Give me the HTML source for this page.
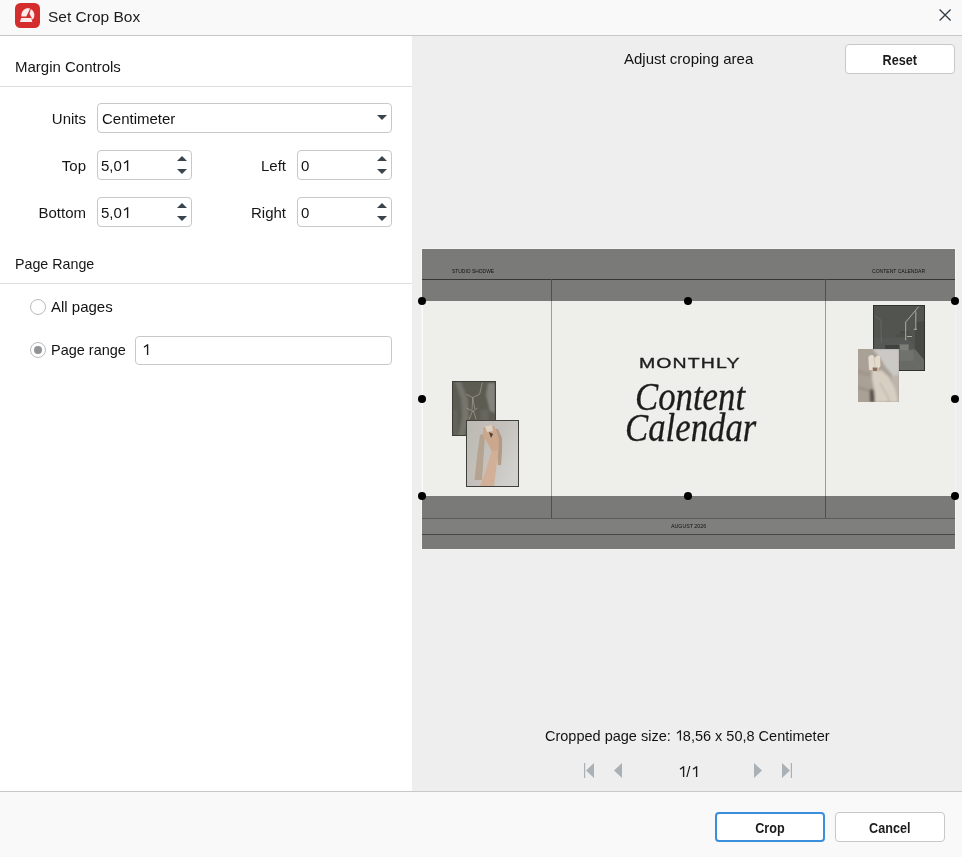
<!DOCTYPE html>
<html><head><meta charset="utf-8">
<style>
*{box-sizing:border-box;margin:0;padding:0}
html,body{width:962px;height:857px;overflow:hidden;background:#fff;font-family:"Liberation Sans",sans-serif;color:#1a1a1a}
.abs{position:absolute}
#title{left:0;top:0;width:962px;height:36px;background:#f9f9f9;border-bottom:1px solid #c6c6c6}

#ttxt{left:48px;top:8px;font-size:15.5px;color:#1b1b1b;white-space:nowrap}
#close{left:937px;top:7px;width:15px;height:15px}
#left{left:0;top:36px;width:412px;height:755px;background:#fff}
#right{left:412px;top:36px;width:550px;height:755px;background:#eeeeee}
.sep{height:1px;background:#dedede;width:412px;left:0}
.h{font-size:15px;color:#161616;white-space:nowrap}
.lbl{font-size:15px;color:#161616;white-space:nowrap;text-align:right}
.box{border:1px solid #c8c8c8;border-radius:4px;background:#fff}
.val{font-size:15px;color:#121212;white-space:nowrap}
.up{width:0;height:0;border-left:5px solid transparent;border-right:5px solid transparent;border-bottom:5px solid #3a444c}
.dn{width:0;height:0;border-left:5px solid transparent;border-right:5px solid transparent;border-top:5px solid #3a444c}
#bottom{left:0;top:791px;width:962px;height:66px;background:#f9f9f9;border-top:1px solid #c9c9c9}
.btn{border-radius:4px;background:#fff;font-size:15px;font-weight:bold;text-align:center;color:#1b1b1b}
.bt{display:inline-block;transform:scaleX(0.87);font-size:14.5px}
.d1{vertical-align:baseline;display:inline-block}
.hd{width:8px;height:8px;border-radius:50%;background:#000}
.nav{color:#a8b0b8}
.tiny{font-size:6px;color:#262626;white-space:nowrap;line-height:7px;transform-origin:0 0}
.monthly{font-size:15px;letter-spacing:0.85px;color:#1e1e1e;white-space:nowrap;line-height:17px;-webkit-text-stroke:0.35px #1e1e1e;transform:scaleX(1.3);transform-origin:0 0}
.big{font-family:"Liberation Serif",serif;font-style:italic;font-size:39.5px;color:#1c1c1c;white-space:nowrap;line-height:44px;-webkit-text-stroke:0.3px #1c1c1c;transform:scaleX(0.88);transform-origin:0 0}
</style></head><body>
<div id="root" style="position:absolute;left:0;top:0;width:962px;height:857px;will-change:transform;overflow:hidden">
<div id="title" class="abs"></div>
<svg id="logo" class="abs" style="left:15px;top:3px" width="25" height="25" viewBox="0 0 25 25">
<rect x="0" y="0" width="25" height="25" rx="5.5" fill="#d32d2d"/>
<path d="M-5.8 13.6 A7 7 0 0 1 2.9 5.4 L-1 13.6 Z" transform="translate(12.3 0)" fill="#fdeceb"/>
<path d="M3.6 5.9 A7 7 0 0 1 5.3 16.7 L2.2 10.7 Z" transform="translate(12.3 0)" fill="#fdeceb"/>
<path d="M-6.1 15.1 L4.1 15.1 L5.0 19.0 L-7.4 19.0 Z" transform="translate(12.3 0)" fill="#fdeceb"/>
</svg>
<div id="ttxt" class="abs">Set Crop Box</div>
<svg id="close" class="abs" viewBox="0 0 15 15"><path d="M2.6 2.5L13.6 13.5M13.6 2.5L2.6 13.5" stroke="#333c44" stroke-width="1.25"/></svg>

<div id="left" class="abs"></div>
<div id="right" class="abs"></div>

<!-- Margin controls -->
<div class="abs h" style="left:15px;top:58px">Margin Controls</div>
<div class="abs sep" style="top:86px"></div>

<div class="abs lbl" style="left:0;width:86px;top:110px">Units</div>
<div class="abs box" style="left:97px;top:103px;width:295px;height:30px"></div>
<div class="abs val" style="left:102px;top:110px">Centimeter</div>
<div class="abs dn" style="left:377px;top:115px"></div>

<div class="abs lbl" style="left:0;width:86px;top:157px">Top</div>
<div class="abs box" style="left:97px;top:150px;width:95px;height:30px"></div>
<div class="abs val" style="left:101px;top:157px">5,0<svg class="d1" width="8.34" height="11" viewBox="0 0 8.34 11"><path d="M5.6 0.2V11M5.6 0.7L2.0 3.3" stroke="#1a1a1a" stroke-width="1.35" fill="none"/></svg></div>
<div class="abs up" style="left:177px;top:156px"></div>
<div class="abs dn" style="left:177px;top:169px"></div>

<div class="abs lbl" style="left:0;width:86px;top:204px">Bottom</div>
<div class="abs box" style="left:97px;top:197px;width:95px;height:30px"></div>
<div class="abs val" style="left:101px;top:204px">5,0<svg class="d1" width="8.34" height="11" viewBox="0 0 8.34 11"><path d="M5.6 0.2V11M5.6 0.7L2.0 3.3" stroke="#1a1a1a" stroke-width="1.35" fill="none"/></svg></div>
<div class="abs up" style="left:177px;top:203px"></div>
<div class="abs dn" style="left:177px;top:216px"></div>

<div class="abs lbl" style="left:200px;width:86px;top:157px">Left</div>
<div class="abs box" style="left:297px;top:150px;width:95px;height:30px"></div>
<div class="abs val" style="left:301px;top:157px">0</div>
<div class="abs up" style="left:377px;top:156px"></div>
<div class="abs dn" style="left:377px;top:169px"></div>

<div class="abs lbl" style="left:200px;width:86px;top:204px">Right</div>
<div class="abs box" style="left:297px;top:197px;width:95px;height:30px"></div>
<div class="abs val" style="left:301px;top:204px">0</div>
<div class="abs up" style="left:377px;top:203px"></div>
<div class="abs dn" style="left:377px;top:216px"></div>

<!-- Page range -->
<div class="abs h" style="left:15px;top:255px;transform:scaleX(0.95);transform-origin:0 0">Page Range</div>
<div class="abs sep" style="top:283px"></div>
<div class="abs" style="left:30px;top:299px;width:16px;height:16px;border-radius:50%;border:1px solid #bbbbbb;background:#fff"></div>
<div class="abs val" style="left:51px;top:298px">All pages</div>
<div class="abs" style="left:30px;top:342px;width:16px;height:16px;border-radius:50%;border:1px solid #bbbbbb;background:#fff"></div>
<div class="abs" style="left:34px;top:346px;width:8px;height:8px;border-radius:50%;background:#909497"></div>
<div class="abs val" style="left:51px;top:341px;transform:scaleX(0.965);transform-origin:0 0">Page range</div>
<div class="abs box" style="left:135px;top:336px;width:257px;height:29px"></div>
<div class="abs val" style="left:142px;top:341px"><svg class="d1" width="8.34" height="11" viewBox="0 0 8.34 11"><path d="M5.6 0.2V11M5.6 0.7L2.0 3.3" stroke="#1a1a1a" stroke-width="1.35" fill="none"/></svg></div>

<!-- Right panel -->
<div class="abs val" style="left:624px;top:50px">Adjust croping area</div>
<div class="abs btn box" style="left:845px;top:44px;width:110px;height:30px;line-height:29px"><span class="bt">Reset</span></div>

<!-- page preview -->
<div class="abs" style="left:421px;top:248px;width:535px;height:302px;background:#f4f4f4"></div>
<div class="abs" style="left:422px;top:249px;width:533px;height:300px;background:#eeeeea;overflow:hidden">
  <div class="abs" style="left:0;top:30px;width:533px;height:1px;background:#6a6a6a"></div>
  <div class="abs" style="left:0;top:270px;width:533px;height:15px;background:#f8f8f5"></div>
  <div class="abs" style="left:0;top:269px;width:533px;height:1px;background:#b0b0b0"></div>
  <div class="abs" style="left:0;top:285px;width:533px;height:1px;background:#8a8a8a"></div>
  <div class="abs" style="left:129px;top:30px;width:1px;height:239px;background:#9a9a9a"></div>
  <div class="abs" style="left:403px;top:30px;width:1px;height:239px;background:#9a9a9a"></div>
  <div class="abs tiny" style="left:30px;top:19px;transform:scaleX(0.82)">STUDIO SHODWE</div>
  <div class="abs tiny" style="left:450px;top:19px;transform:scaleX(0.84)">CONTENT CALENDAR</div>
  <div class="abs tiny" style="left:249px;top:274px;transform:scaleX(0.88)">AUGUST 2026</div>
  <div class="abs monthly" style="left:217px;top:105px">MONTHLY</div>
  <div class="abs big" style="left:213px;top:126px">Content</div>
  <div class="abs big" style="left:203px;top:157px">Calendar</div>
  <!-- photo1 -->
  <svg class="abs" style="left:30px;top:132px" width="44" height="55" viewBox="0 0 44 55">
    <defs>
      <filter id="bl1" x="-20%" y="-20%" width="140%" height="140%"><feGaussianBlur stdDeviation="1.2"/></filter>
      <filter id="bl1b" x="-20%" y="-20%" width="140%" height="140%"><feGaussianBlur stdDeviation="0.35"/></filter>
    </defs>
    <rect width="44" height="55" fill="#5c5c53"/>
    <g filter="url(#bl1)">
      <path d="M3 1 L9 1 L16 18 L17 38 L13 55 L6 55 L10 36 L9 18 Z" fill="#74746b"/>
      <path d="M36 2 L43 2 L43 32 L38 30 L34 14 Z" fill="#83847d"/>
      <path d="M0 30 L5 28 L6 55 L0 55 Z" fill="#64645b"/>
      <path d="M28 30 L36 28 L38 50 L30 52 Z" fill="#66665d"/>
    </g>
    <g filter="url(#bl1b)">
      <path d="M30.4 1.4 L27.6 13.2 L20.7 16.6 L14.5 13.2 M20.7 16.6 L20 29 M20.7 16.6 L22.8 28 M14.5 27 L20.7 30.4 L25.5 27 M20.5 30 L17.3 38 M21.5 30 L24.2 38.6" stroke="#b0ad9b" stroke-width="0.6" fill="none"/>
    </g>
    <rect x="0.5" y="0.5" width="43" height="54" fill="none" stroke="#3f3f3a" stroke-width="1"/>
  </svg>
  <!-- photo2 -->
  <svg class="abs" style="left:44px;top:171px" width="53" height="67" viewBox="0 0 53 67">
    <defs>
      <linearGradient id="p2" x1="0" y1="0" x2="1" y2="0.6">
        <stop offset="0" stop-color="#bcb8b2"/><stop offset="0.6" stop-color="#c5c2bd"/><stop offset="1" stop-color="#d1d0cc"/></linearGradient>
      <filter id="bl2" x="-20%" y="-20%" width="140%" height="140%"><feGaussianBlur stdDeviation="0.7"/></filter>
    </defs>
    <rect width="53" height="67" fill="url(#p2)"/>
    <g filter="url(#bl2)">
      <path d="M14 15 L19 13 L18 30 L16 60 L8.5 60 L11 36 Z" fill="#b5a391"/>
      <path d="M28 9 L32 9 L36 18 L36 32 L35 45 L32 45 L31 30 Z" fill="#b29b86"/>
      <path d="M25.7 30 L32.5 30 L31 42 L28 66 L14 66 L20 50 Z" fill="#d2b097"/>
      <path d="M17 8 L22 5 L28 6 L31 12 L33 20 L32.5 31 L25.7 31 L22 24 L17 16 Z" fill="#cba78e"/>
      <path d="M19 6 L26 5 L27 11 L21 12 Z" fill="#ddd2c6"/>
      <path d="M23 12 L27 14 L25 18 Z" fill="#4d3d33"/>
    </g>
    <rect x="0.5" y="0.5" width="52" height="66" fill="none" stroke="#3f3f3b" stroke-width="1"/>
  </svg>
  <!-- photo3 -->
  <svg class="abs" style="left:451px;top:56px" width="52" height="66" viewBox="0 0 52 66">
    <defs>
      <filter id="bl3" x="-20%" y="-20%" width="140%" height="140%"><feGaussianBlur stdDeviation="0.65"/></filter>
      <filter id="bl3b" x="-20%" y="-20%" width="140%" height="140%"><feGaussianBlur stdDeviation="0.3"/></filter>
    </defs>
    <rect width="52" height="66" fill="#52544f"/>
    <g filter="url(#bl3)">
      <path d="M0 33 L33 33 L40 38 L40 44 L0 44 Z" fill="#575954"/>
      <path d="M42 17 L52 16 L52 58 L42 50 Z" fill="#464843"/>
      <path d="M26.4 45.7 L42 44 L52 56 L52 66 L26.4 66 Z" fill="#686b65"/>
      <path d="M26.4 39.4 L35.7 39.4 L35.7 45.7 L26.4 45.7 Z" fill="#7b7e78"/>
      <path d="M26.4 45.7 L40.7 45.7 L40.7 55.8 L26.4 55.8 Z" fill="#70736d"/>
      <path d="M12 40 L26.4 40 L26.4 44 L12 44 Z" fill="#40423d"/>
      <path d="M27.3 26 L35.7 26 L35.7 30.2 L27.3 30.2 Z" fill="#4a4c47"/>
      <path d="M23 29 L39 29 L39 32.3 L23 32.3 Z" fill="#4d4f4a"/>
    </g>
    <g filter="url(#bl3b)">
      <path d="M33.1 16.7 L45.7 1.6 M32.7 16.7 L32.7 35.2 M42.8 6.2 L42.8 24.3 M40.7 24.3 L44 24.3 M34 31.5 L39 31.5" stroke="#d2d3ce" stroke-width="0.7" fill="none"/>
      <path d="M2 11.3 L7.9 15 L8.3 37.8" stroke="#70726d" stroke-width="0.6" fill="none"/>
    </g>
    <rect x="0.5" y="0.5" width="51" height="65" fill="none" stroke="#30322e" stroke-width="1"/>
  </svg>
  <!-- photo4 -->
  <svg class="abs" style="left:436px;top:100px" width="41" height="53" viewBox="0 0 41 53">
    <defs>
      <filter id="bl4" x="-20%" y="-20%" width="140%" height="140%"><feGaussianBlur stdDeviation="1.0"/></filter>
      <filter id="bl4b" x="-20%" y="-20%" width="140%" height="140%"><feGaussianBlur stdDeviation="0.5"/></filter>
    </defs>
    <rect width="41" height="53" fill="#aaa196"/>
    <g filter="url(#bl4)">
      <path d="M14.5 0 L41 0 L41 27 L35 27 L27 17.3 L22.2 8.9 Z" fill="#cbc9c6"/>
      <path d="M33 27 L41 26 L41 53 L37 53 Z" fill="#bdb6ad"/>
      <path d="M0 20 L12 24 L13 27 L0 25 Z" fill="#9a9187" opacity="0.7"/>
      <path d="M0 37 L12 41 L12 43 L0 40 Z" fill="#938a80" opacity="0.7"/>
      <path d="M14 21 L24 21.5 L31 28 L37 40 L40 53 L17 53 L16 40 L14 30 Z" fill="#d8cfc3"/>
      <path d="M11.7 40.4 L16 40.4 L17 53 L12 53 Z" fill="#5e554e"/>
      <path d="M22 34 L30 48 L31 53" stroke="#a89c8e" stroke-width="0.8" fill="none"/>
    </g>
    <g filter="url(#bl4b)">
      <path d="M10.3 8 Q12 5.5 15 6.2 L17 9 Q19 5.5 22 7 L22.5 17 L19 21.5 L11 21 Z" fill="#e4dbcf"/>
      <path d="M16.2 9 L17 18" stroke="#c4b8aa" stroke-width="0.6" fill="none"/>
      <path d="M14.5 18.5 L19.5 18.5 L19 22 L15 22 Z" fill="#8f6e5c"/>
    </g>
  </svg>
</div>
<div class="abs" style="left:422px;top:301px;width:1px;height:195px;background:#fcfcfa"></div>
<!-- overlays -->
<div class="abs" style="left:422px;top:249px;width:533px;height:52px;background:rgba(0,0,0,0.487)"></div>
<div class="abs" style="left:422px;top:496px;width:533px;height:53px;background:rgba(0,0,0,0.487)"></div>

<!-- handles -->
<div class="abs hd" style="left:418px;top:297px"></div>
<div class="abs hd" style="left:684px;top:297px"></div>
<div class="abs hd" style="left:951px;top:297px"></div>
<div class="abs hd" style="left:418px;top:395px"></div>
<div class="abs hd" style="left:951px;top:395px"></div>
<div class="abs hd" style="left:418px;top:492px"></div>
<div class="abs hd" style="left:684px;top:492px"></div>
<div class="abs hd" style="left:951px;top:492px"></div>

<div class="abs val" style="left:545px;top:728px;font-size:14.5px">Cropped page size: <svg class="d1" width="8.06" height="10.6" viewBox="0 0 8.34 11"><path d="M5.6 0.2V11M5.6 0.7L2.0 3.3" stroke="#1a1a1a" stroke-width="1.35" fill="none"/></svg>8,56 x 50,8 Centimeter</div>
<div class="abs val" style="left:678px;top:763px"><svg class="d1" width="8.34" height="11" viewBox="0 0 8.34 11"><path d="M5.6 0.2V11M5.6 0.7L2.0 3.3" stroke="#1a1a1a" stroke-width="1.35" fill="none"/></svg>/<svg class="d1" width="8.34" height="11" viewBox="0 0 8.34 11"><path d="M5.6 0.2V11M5.6 0.7L2.0 3.3" stroke="#1a1a1a" stroke-width="1.35" fill="none"/></svg></div>
<svg class="abs" style="left:583px;top:762px" width="12" height="17" viewBox="0 0 12 17"><rect x="1" y="1" width="1.2" height="15" fill="#a9b0b6"/><path d="M3 8.5 L11 1 L11 16 Z" fill="#a9b0b6"/></svg>
<svg class="abs" style="left:613px;top:762px" width="10" height="17" viewBox="0 0 10 17"><path d="M1 8.5 L9 1 L9 16 Z" fill="#a9b0b6"/></svg>
<svg class="abs" style="left:753px;top:762px" width="10" height="17" viewBox="0 0 10 17"><path d="M9 8.5 L1 1 L1 16 Z" fill="#a9b0b6"/></svg>
<svg class="abs" style="left:781px;top:762px" width="12" height="17" viewBox="0 0 12 17"><path d="M9 8.5 L1 1 L1 16 Z" fill="#a9b0b6"/><rect x="9.8" y="1" width="1.2" height="15" fill="#a9b0b6"/></svg>

<div id="bottom" class="abs"></div>
<div class="abs btn" style="left:715px;top:812px;width:110px;height:30px;border:2px solid #3b8edb;line-height:27px"><span class="bt">Crop</span></div>
<div class="abs btn" style="left:835px;top:812px;width:110px;height:30px;border:1px solid #c8c8c8;line-height:29px"><span class="bt">Cancel</span></div>
</div>
</body></html>
